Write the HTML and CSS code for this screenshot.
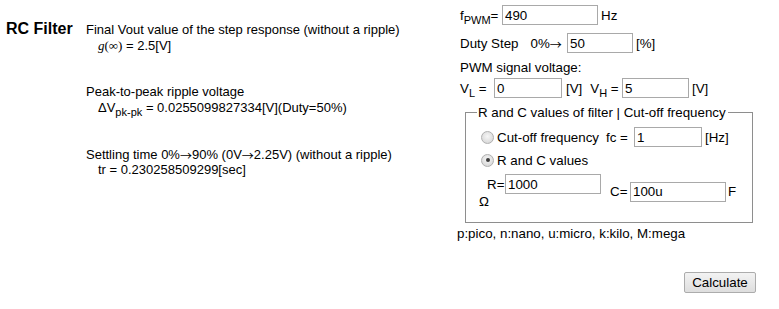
FILE: index.html
```html
<!DOCTYPE html>
<html lang="en">
<head>
<meta charset="utf-8">
<title>RC Filter</title>
<link rel="stylesheet" href="styles.css">
</head>
<body>
<div class="page">
  <div class="left">
    <h1 class="title">RC Filter</h1>
    <div class="results">
      <div class="block">
        <div>Final Vout value of the step response (without a ripple)</div>
        <div class="indent"><span class="serif"><i>g</i>(∞)</span> = 2.5[V]</div>
      </div>
      <div class="block">
        <div>Peak-to-peak ripple voltage</div>
        <div class="indent">ΔV<sub class="sub">pk-pk</sub> = 0.0255099827334[V](Duty=50%)</div>
      </div>
      <div class="block">
        <div>Settling time 0%<span class="arrow">→</span>90% (0V<span class="arrow">→</span>2.25V) (without a ripple)</div>
        <div class="indent">tr = 0.230258509299[sec]</div>
      </div>
    </div>
  </div>
  <div class="right">
    <div class="row row1">
      <span class="lbl w-fpwm">f<sub class="sub">PWM</sub>=</span>
      <input class="field w96" type="text" value="490">
      <span class="unit">Hz</span>
    </div>
    <div class="row row2">
      <span class="lbl w-duty">Duty Step<span class="gap12"></span>0%<span class="arrow">→</span></span>
      <input class="field w66" type="text" value="50">
      <span class="unit">[%]</span>
    </div>
    <div class="textrow">PWM signal voltage:</div>
    <div class="row row4">
      <span class="lbl w-vl">V<sub class="sub">L</sub> =</span>
      <input class="field w68" type="text" value="0">
      <span class="lbl w-mid"><span class="unit2">[V]</span><span class="vh">V<sub class="sub">H</sub> =</span></span>
      <input class="field w67" type="text" value="5">
      <span class="unit">[V]</span>
    </div>
    <fieldset class="box">
      <legend class="legend">R and C values of filter | Cut-off frequency</legend>
      <div class="row">
        <input class="radio" type="radio" name="mode">
        <span class="lbl w-cut">Cut-off frequency<span class="fc">fc =</span></span>
        <input class="field w68" type="text" value="1">
        <span class="unit">[Hz]</span>
      </div>
      <div class="row rcrow">
        <input class="radio" type="radio" name="mode" checked>
        <span>R and C values</span>
      </div>
      <div class="rctable">
        <div class="rcell">
          <div class="row">
            <span class="lbl w-r">R=</span>
            <input class="field w96" type="text" value="1000">
          </div>
          <div class="ohm">Ω</div>
        </div>
        <div class="row ccell">
          <span class="lbl w-c">C=</span>
          <input class="field w96" type="text" value="100u">
          <span class="unit2">F</span>
        </div>
      </div>
    </fieldset>
    <div class="notes">p:pico, n:nano, u:micro, k:kilo, M:mega</div>
    <div class="actions">
      <button class="btn" type="button">Calculate</button>
    </div>
  </div>
</div>
</body>
</html>
```
FILE: styles.css
```css
html, body {
  margin: 0;
  padding: 0;
  background: #ffffff;
}
body {
  font-family: "Liberation Sans", Arial, sans-serif;
  font-size: 10pt;
  color: #000000;
}
.page {
  display: flex;
  align-items: flex-start;
}
.left {
  width: 457px;
  display: flex;
  align-items: baseline;
  padding-top: 20px;
}
.title {
  margin: 0;
  width: 80px;
  padding-left: 6px;
  font-size: 16px;
  font-weight: bold;
  line-height: 18px;
}
.results {
  font-size: 13px;
  line-height: 15.6px;
}
.block {
  margin-bottom: 31.2px;
}
.indent {
  padding-left: 12px;
}
.serif {
  font-family: "Liberation Serif", "Times New Roman", serif;
  font-size: 13px;
}
.sub {
  font-size: 11px;
  vertical-align: -4px;
  line-height: 0;
}
.arrow {
  font-family: "Noto Sans CJK JP", "DejaVu Sans", sans-serif;
  font-size: 12px;
  line-height: 0;
  vertical-align: -1.5px;
}
.right {
  width: 299px;
}
.row {
  display: flex;
  align-items: center;
  height: 20px;
  white-space: nowrap;
}
.row1, .row2, .row4, .textrow {
  padding-left: 3px;
}
.row1 { margin-top: 5px; }
.row2 { margin-top: 8px; }
.textrow {
  margin-top: 7px;
  height: 15px;
  line-height: 15px;
}
.row4 { margin-top: 3px; }
.lbl {
  display: inline-block;
  flex: none;
}
.w-fpwm { width: 42px; }
.w-duty { width: 107px; }
.w-vl { width: 34px; }
.w-mid { width: 60px; padding-left: 2px; box-sizing: border-box; }
.w-cut { width: 137px; }
.w-r { width: 18px; padding-left: 8px; }
.w-c { width: 20px; }
.gap12 {
  display: inline-block;
  width: 12px;
}
.vh {
  margin-left: 8px;
}
.fc {
  margin-left: 7px;
}
.unit {
  padding-left: 3px;
}
.unit2 {
  padding-left: 2px;
}
.field {
  box-sizing: border-box;
  height: 20px;
  margin: 0;
  padding: 0 2px;
  border: 1px solid #a9a9a9;
  border-radius: 0;
  background: #ffffff;
  font-family: "Liberation Sans", Arial, sans-serif;
  font-size: 10pt;
  color: #000000;
  outline: none;
  flex: none;
}
.w96 { width: 96px; }
.w66 { width: 66px; }
.w68 { width: 68px; }
.w67 { width: 67px; }
.box {
  margin: 7px 0 0 8px;
  width: 288px;
  box-sizing: border-box;
  padding: 7px 0 13px 11px;
  border: 1px solid #8e8e8e;
  min-width: 0;
}
.legend {
  padding: 0 2px 0 1px;
  line-height: 15px;
  font-size: 10pt;
}
.radio {
  appearance: none;
  -webkit-appearance: none;
  width: 13px;
  height: 13px;
  margin: 0 3px 0 4px;
  border: 1px solid #b0b0b0;
  border-radius: 50%;
  background: radial-gradient(circle at 50% 40%, #f6f6f6 0%, #dcdcdc 70%, #cccccc 100%);
  box-sizing: border-box;
  flex: none;
  position: relative;
}
.radio:checked::after {
  content: "";
  position: absolute;
  left: 3.5px;
  top: 3.5px;
  width: 4px;
  height: 4px;
  border-radius: 50%;
  background: #3c3c3c;
}
.rcrow {
  margin-top: 3px;
}
.rctable {
  display: flex;
  align-items: center;
  margin-top: 4px;
}
.rcell {
  width: 124px;
  padding-left: 2px;
}
.ohm {
  height: 15px;
  line-height: 15px;
}
.ccell {
  margin-left: 7px;
}
.notes {
  margin-top: 3px;
  line-height: 15px;
  height: 15px;
}
.actions {
  display: flex;
  justify-content: flex-end;
  margin-top: 31px;
}
.btn {
  width: 72px;
  height: 21px;
  margin: 0;
  padding: 0;
  border: 1px solid #acacac;
  border-radius: 2px;
  background: linear-gradient(#f3f3f3, #dedede);
  font-family: "Liberation Sans", Arial, sans-serif;
  font-size: 10pt;
  color: #000000;
}
```
